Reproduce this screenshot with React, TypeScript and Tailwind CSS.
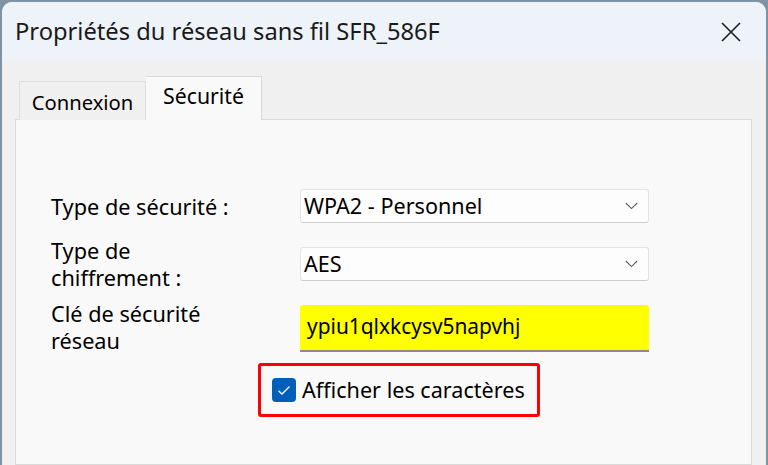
import React from "react";

const font = { fontFamily: '"Noto Sans", "Liberation Sans", sans-serif' };

function Chevron() {
  return (
    <svg width="13" height="8" viewBox="0 0 13 8" fill="none" className="shrink-0">
      <path d="M0.8 1 L6.5 6.6 L12.2 1" stroke="#5c5c5c" strokeWidth="1.1" />
    </svg>
  );
}

function Select({ value }: { value: string }) {
  return (
    <div className="w-[349px] h-[34px] bg-[#fdfdfd] border border-[#e3e3e3] border-b-[#cfcfcf] rounded-[3px] flex items-center justify-between pl-[3px] pr-[10px]">
      <span className="text-[21.6px] text-black leading-none">{value}</span>
      <Chevron />
    </div>
  );
}

export default function App() {
  return (
    <div
      className="w-[768px] h-[465px] bg-[#7f93a5] pt-[2px] pl-[2px] pr-[2px] overflow-hidden"
      style={font}
    >
      <div className="h-full rounded-t-[10px] bg-[#f0f0f0] overflow-hidden flex flex-col">
        <div className="h-[59px] shrink-0 bg-[#eef3f9] flex items-center justify-between pl-[13px] pr-[25px]">
          <span className="text-[23.7px] text-[#1a1a1a] leading-none">
            Propriétés du réseau sans fil SFR_586F
          </span>
          <svg width="20" height="20" viewBox="0 0 20 20" fill="none">
            <path d="M1 1 L19 19 M19 1 L1 19" stroke="#1c1c1c" strokeWidth="1.6" />
          </svg>
        </div>
        <div className="flex-1 flex flex-col pl-[13px] pr-[14px] pt-[15px]">
          <div className="flex items-end pl-[4px] relative z-10 -mb-px">
            <div className="w-[127px] h-[39px] bg-[#f0f0f0] border border-[#dedede] border-b-0 flex items-center justify-center">
              <span className="text-[20.2px] text-black leading-none pt-[3px]">Connexion</span>
            </div>
            <div className="w-[116px] h-[44px] bg-[#f9f9f9] border border-[#dadada] border-b-0 border-l-0 flex items-start justify-center pt-[8px]">
              <span className="text-[21.3px] text-black leading-none">Sécurité</span>
            </div>
          </div>
          <div className="flex-1 bg-[#f9f9f9] border border-[#dadada] pl-[35px] pt-[69px] flex flex-col">
            <div className="flex items-center h-[34px]">
              <div className="w-[249px] text-[21.7px] text-black leading-[27px]">Type de sécurité :</div>
              <Select value="WPA2 - Personnel" />
            </div>
            <div className="flex items-center mt-[14px]">
              <div className="w-[249px] text-[21.7px] text-black leading-[27px]">
                Type de
                <br />
                chiffrement :
              </div>
              <Select value="AES" />
            </div>
            <div className="flex items-start mt-[14px]">
              <div className="w-[249px] -mt-[5px] text-[21.7px] text-black leading-[27px]">
                Clé de sécurité
                <br />
                réseau
              </div>
              <div className="w-[349px] h-[47px] bg-[#ffff00] border-b-2 border-[#8c8c8c] rounded-t-[3px] flex items-center pl-[7px] pb-[3px]">
                <span className="text-[20.9px] text-black leading-none">ypiu1qlxkcysv5napvhj</span>
              </div>
            </div>
            <div className="mt-[9px] ml-[207px] w-[282px] h-[54px] border-[3px] border-[#ff0000] rounded-[3px] flex items-center pl-[11px]">
              <div className="w-[24px] h-[24px] rounded-[4px] bg-[#005fb8] flex items-center justify-center shrink-0">
                <svg width="14" height="11" viewBox="0 0 14 11" fill="none">
                  <path d="M1.5 5.8 L5 9 L12.5 1.5" stroke="white" strokeWidth="1.3" />
                </svg>
              </div>
              <span className="ml-[6px] text-[21.6px] text-black leading-none">Afficher les caractères</span>
            </div>
          </div>
        </div>
      </div>
    </div>
  );
}
